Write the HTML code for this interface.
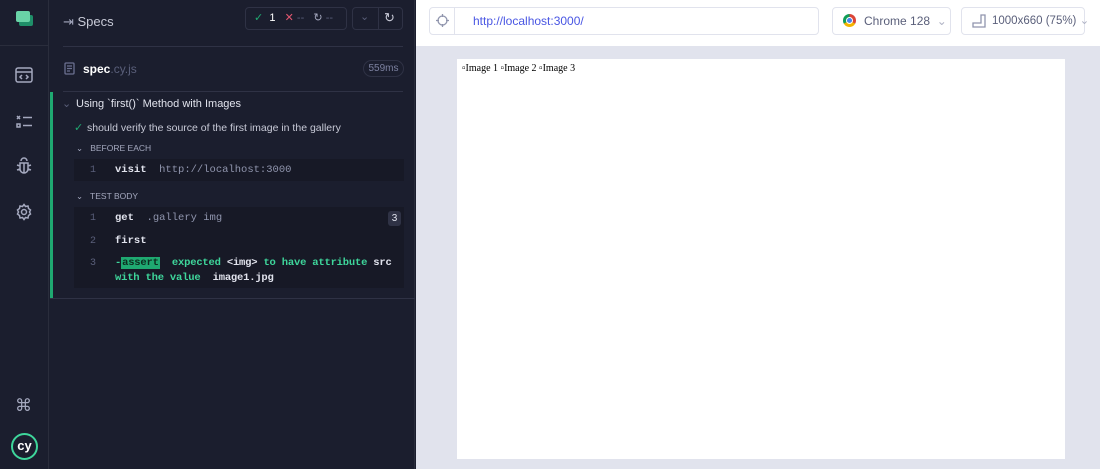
<!DOCTYPE html>
<html><head><meta charset="utf-8"><style>
*{box-sizing:border-box;margin:0;padding:0}
body{width:1100px;height:469px;overflow:hidden;background:#1b1e2e;font-family:"Liberation Sans",sans-serif;position:relative}
.abs{position:absolute;white-space:nowrap}
.side{left:0;top:0;width:49px;height:469px;background:#1b1e2e;border-right:1px solid #2a2d3c}
.rep{left:50px;top:0;width:365px;height:469px;background:#1b1e2e;border-right:1px solid #2a2d3c}
.mono{font-family:"Liberation Mono",monospace;font-size:10.5px}
.right{left:416px;top:0;width:684px;height:469px;background:#e1e3ed}
.tb{left:0;top:0;width:684px;height:46px;background:#fff}
.box{border:1px solid #e1e3ed;border-radius:4px;height:28px;top:7px;background:#fff;font-size:12px;color:#5a5f7a;line-height:26px}
</style></head><body>
<div class="abs side">
  <div class="abs" style="left:19px;top:15px;width:14px;height:11px;background:#1f8f69;border-radius:2px"></div>
  <div class="abs" style="left:16px;top:11px;width:14px;height:11px;background:#69d3a7;border-radius:2px"></div>
  <div class="abs" style="left:0;top:45px;width:49px;height:1px;background:#2a2d3c"></div>
  <svg class="abs" style="left:15px;top:67px" width="18" height="16" viewBox="0 0 18 16" fill="none" stroke="#a4a8be" stroke-width="1.5"><rect x="1" y="1" width="16" height="14" rx="2"/><path d="M1 5h16M7 8l-2 2 2 2M11 8l2 2-2 2"/></svg>
  <svg class="abs" style="left:15px;top:114px" width="18" height="16" viewBox="0 0 18 16" fill="none" stroke="#a4a8be" stroke-width="1.5"><path d="M2 2l3 3M5 2l-3 3M8 3.5h9M2 10h3v3H2zM8 11.5h9"/></svg>
  <svg class="abs" style="left:16px;top:157px" width="16" height="18" viewBox="0 0 16 18" fill="none" stroke="#a4a8be" stroke-width="1.5"><path d="M5 4a3 3 0 016 0M4 6h8v6a4 4 0 01-8 0zM8 6v10M1 8l3 1M15 8l-3 1M1 13l3-1M15 13l-3-1"/></svg>
  <svg class="abs" style="left:15px;top:203px" width="18" height="18" viewBox="0 0 18 18" fill="none" stroke="#a4a8be" stroke-width="1.5"><circle cx="9" cy="9" r="2.5"/><path d="M9 1.5l1.5 2 2.5-.5.5 2.5 2 1.5-1 2 1 2-2 1.5-.5 2.5-2.5-.5L9 16.5l-1.5-2-2.5.5-.5-2.5-2-1.5 1-2-1-2 2-1.5.5-2.5 2.5.5z"/></svg>
  <div class="abs" style="left:15px;top:396px;color:#a4a8be;font-size:17px;font-family:'DejaVu Sans',sans-serif">⌘</div>
  <div class="abs" style="left:11px;top:433px;width:27px;height:27px;border-radius:50%;border:2px solid #3ed69b;color:#fff;font-size:13px;font-weight:bold;text-align:center;line-height:22px">cy</div>
</div>
<div class="abs rep">
  <div class="abs" style="left:13px;top:14px;color:#a4a8be;font-size:13px">⇥ <span style="color:#c8cad7">Specs</span></div>
  <div class="abs" style="left:195px;top:7px;width:102px;height:23px;border:1px solid #2f3245;border-radius:4px;font-size:11px;line-height:21px;color:#5a5f7a;padding-left:8px"><span style="color:#1fa971">✓</span> <b style="color:#fff;font-weight:normal">&nbsp;1</b> &nbsp;&nbsp;<span style="color:#e45770">✕</span> -- &nbsp;&nbsp;<span style="color:#a4a8be">↻</span> --</div>
  <div class="abs" style="left:302px;top:7px;width:51px;height:23px;border:1px solid #2f3245;border-radius:4px"><div class="abs" style="left:25px;top:0;width:1px;height:21px;background:#2f3245"></div><span class="abs" style="left:7px;top:2px;color:#5a5f7a;font-size:11px">⌄</span><span class="abs" style="left:31px;top:2px;color:#c8cad7;font-size:13px">↻</span></div>
  <div class="abs" style="left:13px;top:46px;width:340px;height:1px;background:#2f3245"></div>
  <svg class="abs" style="left:14px;top:62px" width="11" height="13" viewBox="0 0 11 13" fill="none" stroke="#6b7090" stroke-width="1.3"><rect x="1" y="1" width="9" height="11" rx="1"/><path d="M3 4h5M3 6.5h5M3 9h3"/></svg>
  <div class="abs" style="left:33px;top:62px;font-size:12px;color:#fff;font-weight:bold">spec<span style="color:#5a5f7a;font-weight:normal">.cy.js</span></div>
  <div class="abs" style="left:313px;top:60px;width:41px;height:17px;border:1px solid #2f3245;border-radius:9px;color:#7c81a0;font-size:10px;text-align:center;line-height:15px">559ms</div>
  <div class="abs" style="left:13px;top:91px;width:340px;height:1px;background:#2f3245"></div>
  <div class="abs" style="left:0;top:92px;width:3px;height:206px;background:#1fa971"></div>
  <div class="abs" style="left:0;top:298px;width:365px;height:1px;background:#2f3245"></div>
  <div class="abs" style="left:12px;top:97px;font-size:11px;color:#5a5f7a">⌄</div>
  <div class="abs" style="left:26px;top:98px;font-size:11px;color:#e1e3ed">Using `first()` Method with Images</div>
  <div class="abs" style="left:24px;top:121px;font-size:11px;color:#1fa971">✓</div>
  <div class="abs" style="left:37px;top:122px;font-size:10.5px;color:#c8cad7">should verify the source of the first image in the gallery</div>
  <div class="abs" style="left:26px;top:143px;font-size:8.5px;color:#a4a8be">⌄&nbsp;&nbsp; BEFORE EACH</div>
  <div class="abs" style="left:24px;top:159px;width:330px;height:22px;background:#171926"></div>
  <div class="abs mono" style="left:40px;top:165px;color:#5a5f7a;font-size:10px">1</div>
  <div class="abs mono" style="left:65px;top:164px;color:#e1e3ed;font-weight:bold">visit <span style="color:#9095ad;font-weight:normal">&nbsp;http://localhost:3000</span></div>
  <div class="abs" style="left:26px;top:191px;font-size:8.5px;color:#a4a8be">⌄&nbsp;&nbsp; TEST BODY</div>
  <div class="abs" style="left:24px;top:207px;width:330px;height:81px;background:#171926"></div>
  <div class="abs mono" style="left:40px;top:213px;color:#5a5f7a;font-size:10px">1</div>
  <div class="abs mono" style="left:65px;top:212px;color:#e1e3ed;font-weight:bold">get <span style="color:#9095ad;font-weight:normal">&nbsp;.gallery img</span></div>
  <div class="abs" style="left:338px;top:211px;width:13px;height:15px;background:#2f3245;border-radius:3px;color:#e1e3ed;font-size:10px;text-align:center;line-height:15px">3</div>
  <div class="abs mono" style="left:40px;top:236px;color:#5a5f7a;font-size:10px">2</div>
  <div class="abs mono" style="left:65px;top:235px;color:#e1e3ed;font-weight:bold">first</div>
  <div class="abs mono" style="left:40px;top:258px;color:#5a5f7a;font-size:10px">3</div>
  <div class="abs mono" style="left:65px;top:256px;color:#3ed69b;font-weight:bold;line-height:15px;letter-spacing:-0.2px">-<span style="background:#1fa971;color:#0d2e20;padding:0 1px">assert</span>&nbsp; expected <span style="color:#e1e3ed">&lt;img&gt;</span> to have attribute <span style="color:#e1e3ed">src</span><br>with the value <span style="color:#e1e3ed">&nbsp;image1.jpg</span></div>
</div>
<div class="abs right">
  <div class="abs tb"></div>
  <div class="abs box" style="left:13px;width:390px"><div class="abs" style="left:24px;top:0;width:1px;height:26px;background:#e1e3ed"></div><svg class="abs" style="left:6px;top:6px" width="13" height="13" viewBox="0 0 13 13" fill="none" stroke="#9095ad" stroke-width="1.3"><circle cx="6.5" cy="6.5" r="4.5"/><path d="M6.5 0v3M6.5 10v3M0 6.5h3M10 6.5h3"/></svg><span class="abs" style="left:43px;color:#4956e3">http://localhost:3000/</span></div>
  <div class="abs box" style="left:416px;width:119px"><span class="abs" style="left:10px;top:6px;width:13px;height:13px;border-radius:50%;background:conic-gradient(#db4437 0 120deg,#f4b400 120deg 240deg,#0f9d58 240deg);"></span><span class="abs" style="left:14px;top:10px;width:5px;height:5px;border-radius:50%;background:#4285f4;outline:1px solid #fff"></span><span class="abs" style="left:31px">Chrome 128 <span style="color:#b0b3c5">&nbsp;⌄</span></span></div>
  <div class="abs box" style="left:545px;width:124px"><svg class="abs" style="left:10px;top:6px" width="14" height="14" viewBox="0 0 14 14" fill="none" stroke="#9095ad" stroke-width="1.3"><path d="M1 13h12V1H9v8H1z"/></svg><span class="abs" style="left:30px;font-size:11.5px">1000x660 (75%) <span style="color:#b0b3c5">⌄</span></span></div>
  <div class="abs" style="left:41px;top:59px;width:608px;height:400px;background:#fff;font-family:'Liberation Serif',serif;font-size:10px;color:#000;padding:4px 5px">▫Image 1 ▫Image 2 ▫Image 3</div>
</div>
</body></html>
